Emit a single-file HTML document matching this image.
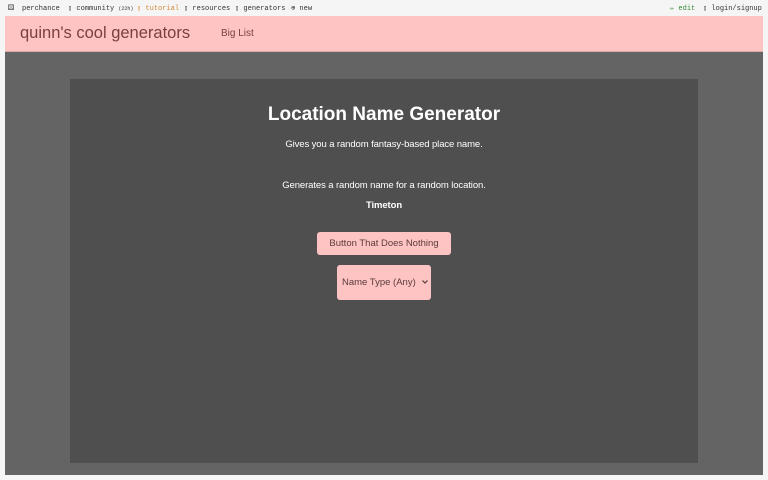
<!DOCTYPE html>
<html><head><style>
body{margin:0;width:768px;height:480px;background:#f5f5f5;font-family:"Liberation Sans",sans-serif;overflow:hidden;position:relative}
.top{position:absolute;top:1px;left:0;right:0;height:16px;font-family:"Liberation Mono",monospace;font-size:7px;color:#333;line-height:16px}
.top span{position:absolute;top:0;white-space:nowrap}
.frame{position:absolute;left:5px;top:16px;width:758px;height:459px;background:#646464}
.hdr{position:absolute;left:0;top:0;width:758px;height:35px;background:#fec4c4;border-bottom:1px solid #e0a8a8}
.brand{position:absolute;left:15px;top:8px;font-size:16.5px;color:#7a4040;font-family:"Liberation Sans",sans-serif;white-space:nowrap}
.big{position:absolute;left:216px;top:12px;font-size:10px;color:#7a4040;font-family:"Liberation Sans",sans-serif}
.card{position:absolute;left:65px;top:63px;width:628px;height:384px;background:#4f4f4f;color:#fff;text-align:center}
h1{position:absolute;left:0;right:0;top:25px;margin:0;font-size:19px;font-weight:bold}
.t{position:absolute;left:0;right:0;font-size:9.5px;letter-spacing:-0.1px}
.btn{position:absolute;left:247px;top:153px;width:134px;height:23px;background:#fec4c4;border-radius:3px;color:#5a3a3a;font-size:9.5px;line-height:23px}
.sel{position:absolute;left:267px;top:186px;width:94px;height:35px;background:#fec4c4;border-radius:3px;color:#5a3a3a;font-size:9.5px;line-height:35px;text-align:left;padding-left:5px;box-sizing:border-box}
.sel svg{position:absolute;right:3px;top:15px}
</style></head><body>
<div class="top">
<span style="left:8px;font-size:10px">⚄</span>
<span style="left:22px">perchance</span>
<span style="left:68px">▯ community <small style="font-size:5px">(22h)</small></span>
<span style="left:137px;color:#d48a3a">▯ tutorial</span>
<span style="left:184px">▯ resources</span>
<span style="left:235px">▯ generators</span>
<span style="left:291px">⊕ new</span>
<span style="left:670px;color:#3a8a3a">✏ edit</span>
<span style="left:703px">▯ login/signup</span>
</div>
<div class="frame">
<div class="hdr"><div class="brand">quinn's cool generators</div><div class="big">Big List</div></div>
<div class="card">
<h1>Location Name Generator</h1>
<div class="t" style="top:60px">Gives you a random fantasy-based place name.</div>
<div class="t" style="top:101px">Generates a random name for a random location.</div>
<div class="t" style="top:121px;font-weight:bold">Timeton</div>
<div class="btn">Button That Does Nothing</div>
<div class="sel">Name Type (Any)<svg width="6" height="4" viewBox="0 0 6 4"><path d="M0.5 0.5L3 3L5.5 0.5" stroke="#5a3a3a" stroke-width="1.2" fill="none"/></svg></div>
</div>
</div>
</body></html>
